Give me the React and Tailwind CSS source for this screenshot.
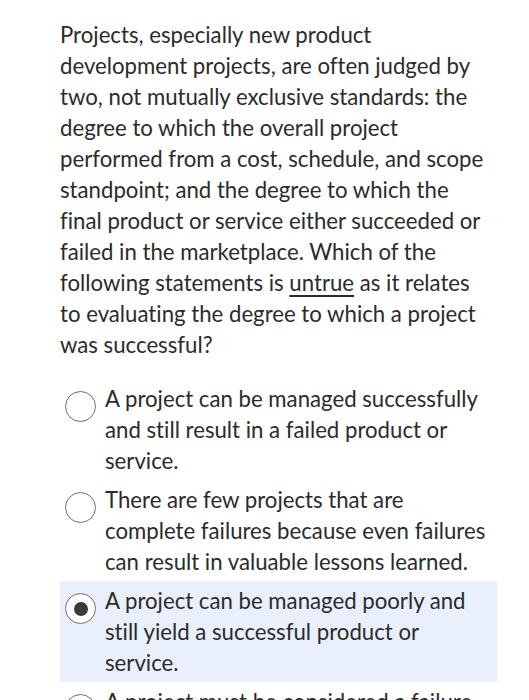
import React from "react";

const options = [
  { text: "A project can be managed successfully and still result in a failed product or service.", selected: false },
  { text: "There are few projects that are complete failures because even failures can result in valuable lessons learned.", selected: false },
  { text: "A project can be managed poorly and still yield a successful product or service.", selected: true },
  { text: "A project must be considered a failure if it goes over budget or misses its deadline.", selected: false },
];

function Radio({ selected }) {
  return (
    <div className="mt-[8px] flex h-[31px] w-[31px] shrink-0 items-center justify-center rounded-full border-[1.5px] border-[#6e6e6e] bg-white">
      {selected && <div className="h-[14px] w-[14px] rounded-full bg-[#3a3a3a]" />}
    </div>
  );
}

export default function App() {
  return (
    <div className="h-[700px] overflow-hidden bg-white pl-[60px] pr-[32px] pt-[19px] font-['Lato','Liberation_Sans',sans-serif] text-[22.2px] leading-[31px] text-[#2b2b2b] [font-variant-ligatures:none]">
      <p className="w-[429px]">
        Projects, especially new product development projects, are often judged by two, not mutually
        exclusive standards: the degree to which the overall project performed from a cost, schedule,
        and scope standpoint; and the degree to which the final product or service either succeeded or
        failed in the marketplace. Which of the following statements is{" "}
        <span className="underline decoration-[1.5px] underline-offset-[4px]">untrue</span> as it relates
        to evaluating the degree to which a project was successful?
      </p>
      <div className="mt-[19px] flex w-[437px] flex-col">
        {options.map((o, i) => (
          <div
            key={i}
            className={
              o.selected
                ? "flex gap-[9px] bg-[#e9f0fb] py-[4px] pl-[5px] pr-[7px]"
                : "flex gap-[9px] py-[4px] pl-[5px] pr-[7px]"
            }
          >
            <Radio selected={o.selected} />
            <div>{o.text}</div>
          </div>
        ))}
      </div>
    </div>
  );
}
